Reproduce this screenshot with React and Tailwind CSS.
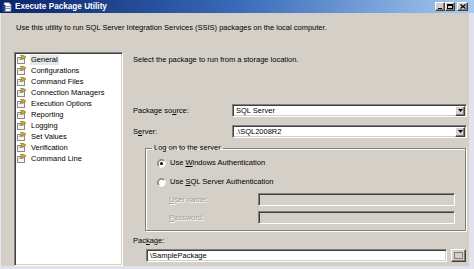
import React from 'react';

const raised = 'bg-[#d4d0c8] border border-t-white border-l-white border-r-[#404040] border-b-[#404040] shadow-[inset_-1px_-1px_0_#808080]';
const sunken = 'border border-t-[#808080] border-l-[#808080] border-r-white border-b-white shadow-[inset_1px_1px_0_#404040,inset_-1px_-1px_0_#d4d0c8]';

const pages = [
    'General',
    'Configurations',
    'Command Files',
    'Connection Managers',
    'Execution Options',
    'Reporting',
    'Logging',
    'Set Values',
    'Verification',
    'Command Line',
];

const PageIcon = () => (
    <svg width="10" height="9" viewBox="0 0 10 9" className="shrink-0">
        <rect x="0.5" y="2.5" width="7" height="6" fill="#f4f4f4" stroke="#8a8a8a" />
        <rect x="1.5" y="4" width="5" height="1" fill="#b8b8b8" />
        <path d="M3 0 L6 0 L9 2 L6 4 L3 4 L5 2 Z" fill="#c9a93a" stroke="#8a7418" strokeWidth="0.6" />
    </svg>
);

const Radio = ({ checked }) => (
    <svg width="9" height="9" viewBox="0 0 12 12" className="shrink-0">
        <circle cx="6" cy="6" r="5.5" fill="#fff" />
        <path d="M2.1 9.9 A5.5 5.5 0 0 1 9.9 2.1" stroke="#808080" strokeWidth="1" fill="none" />
        <path d="M2.8 9.2 A4.5 4.5 0 0 1 9.2 2.8" stroke="#404040" strokeWidth="1" fill="none" />
        {checked && <circle cx="6" cy="6" r="2" fill="#000" />}
    </svg>
);

const Combo = ({ value }) => (
    <div className={`w-[235px] h-[13px] bg-white flex items-center ${sunken}`}>
        <span className="flex-1 pl-[3px] leading-[10px]">{value}</span>
        <div className={`w-[10px] h-[10px] mr-[1px] flex items-center justify-center ${raised}`}>
            <svg width="5" height="3" viewBox="0 0 5 3"><path d="M0 0 L5 0 L2.5 3 Z" fill="#000" /></svg>
        </div>
    </div>
);

const TitleButton = ({ children, className = '' }) => (
    <div className={`w-[10px] h-[9px] flex items-center justify-center ${raised} ${className}`}>{children}</div>
);

export default function App() {
    return (
        <div className="w-[474px] h-[269px] overflow-hidden flex flex-col bg-[#d4d0c8] text-black font-['Liberation_Sans',Arial,sans-serif] text-[7.5px]">
            {/* title bar */}
            <div className="h-[13px] shrink-0 flex items-center bg-gradient-to-r from-[#0a246a] via-[#3a6ab8] to-[#a6caf0] pl-[2px] pr-[6px]">
                <svg width="10" height="10" viewBox="0 0 10 10" className="shrink-0">
                    <path d="M2 0.5 L7 0.5 L9 2.5 L9 9.5 L2 9.5 Z" fill="#fff" stroke="#6a7a9a" />
                    <rect x="0.5" y="3" width="3" height="6" fill="#1d3f8f" />
                    <rect x="4" y="4" width="4" height="1" fill="#8090b0" />
                    <rect x="4" y="6" width="4" height="1" fill="#8090b0" />
                </svg>
                <span className="ml-[3px] text-white font-bold text-[8.2px] leading-[10px]">Execute Package Utility</span>
                <div className="ml-auto flex items-center">
                    <TitleButton>
                        <div className="w-[4px] h-[1.5px] bg-black mt-[4px] -ml-[1px]" />
                    </TitleButton>
                    <TitleButton>
                        <div className="w-[6px] h-[5px] border border-black border-t-2" />
                    </TitleButton>
                    <TitleButton className="ml-[2px] w-[11px]">
                        <svg width="6" height="5" viewBox="0 0 6 5"><path d="M0.5 0.5 L5.5 4.5 M5.5 0.5 L0.5 4.5" stroke="#000" strokeWidth="1.3" /></svg>
                    </TitleButton>
                </div>
            </div>

            {/* body */}
            <div className="flex-1 min-h-0 flex flex-col border-l border-l-[#e8e8ee] border-r-[5px] border-r-[#e2e2ee] border-b-[3px] border-b-[#e2e2ee]">
                <p className="pt-[10px] pl-[15px] leading-[10px]">
                    Use this utility to run SQL Server Integration Services (SSIS) packages on the local computer.
                </p>

                <div className="mt-[19px] flex-1 min-h-0 flex">
                    {/* page list */}
                    <div className={`ml-[13px] w-[109px] bg-white pt-[1px] ${sunken}`}>
                        {pages.map((p, i) => (
                            <div key={p} className="h-[11px] flex items-center pl-[2px]">
                                <PageIcon />
                                <span className={`ml-[3px] px-[1px] leading-[10px] ${i === 0 ? 'bg-[#e6e6e6]' : ''}`}>{p}</span>
                            </div>
                        ))}
                    </div>

                    {/* general page */}
                    <div className="flex-1 pl-[10px] pt-[3px] flex flex-col">
                        <p className="leading-[10px]">Select the package to run from a storage location.</p>

                        <div className="mt-[39px] h-[13px] flex items-center">
                            <span className="w-[99px]">Package so<u>u</u>rce:</span>
                            <Combo value="SQL Server" />
                        </div>
                        <div className="mt-[8px] h-[13px] flex items-center">
                            <span className="w-[99px]">S<u>e</u>rver:</span>
                            <Combo value=".\SQL2008R2" />
                        </div>

                        <fieldset className="mt-[5px] ml-[12px] w-[321px] border border-[#808080] shadow-[inset_1px_1px_0_#fff,1px_1px_0_#fff] pl-[11px] pb-[6px]">
                            <legend className="ml-[-5px] px-[2px] leading-[10px]">Log on to the server</legend>
                            <div className="mt-[5px] h-[10px] flex items-center gap-[4px]">
                                <Radio checked />
                                <span>Use <u>W</u>indows Authentication</span>
                            </div>
                            <div className="mt-[9px] h-[10px] flex items-center gap-[4px]">
                                <Radio />
                                <span>Use <u>S</u>QL Server Authentication</span>
                            </div>
                            <div className="mt-[6px] h-[13px] flex items-center pl-[12px]">
                                <span className="w-[89px] text-[#a0a0a0] [text-shadow:1px_1px_0_#fff]"><u>U</u>ser name:</span>
                                <div className={`w-[197px] h-[13px] ${sunken}`} />
                            </div>
                            <div className="mt-[5px] h-[13px] flex items-center pl-[12px]">
                                <span className="w-[89px] text-[#a0a0a0] [text-shadow:1px_1px_0_#fff]"><u>P</u>assword:</span>
                                <div className={`w-[197px] h-[13px] ${sunken}`} />
                            </div>
                        </fieldset>

                        <p className="mt-[5px] leading-[10px]">Pac<u>k</u>age:</p>
                        <div className="mt-[3px] ml-[13px] flex items-center gap-[4px]">
                            <div className={`w-[301px] h-[13px] bg-white flex items-center pl-[3px] ${sunken}`}>
                                <span className="leading-[10px]">\SamplePackage</span>
                            </div>
                            <div className={`w-[15px] h-[13px] flex items-center justify-center ${raised}`}>
                                <div className="w-[9px] h-[7px] border border-[#808080]" />
                            </div>
                        </div>
                    </div>
                </div>
            </div>
        </div>
    );
}
